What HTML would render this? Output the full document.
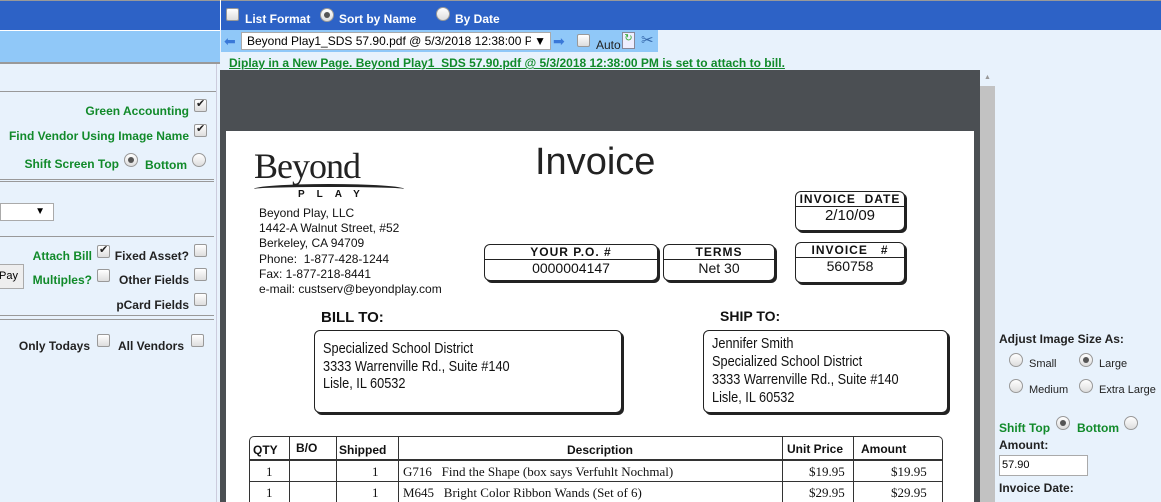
<!DOCTYPE html>
<html><head><meta charset="utf-8"><style>
*{margin:0;padding:0;box-sizing:border-box}
html,body{width:1161px;height:502px;overflow:hidden}
body{background:#e8f2fc;font-family:"Liberation Sans",Arial,sans-serif;position:relative}
.a{position:absolute;white-space:nowrap}
.g{color:#118a2a;font-weight:bold;font-size:12px}
.k{color:#222;font-weight:bold;font-size:12px}
.cb{position:absolute;width:13px;height:13px;border:1px solid #999;border-radius:2px;background:linear-gradient(#fff,#ddd)}
.cb.c::after{content:"✔";position:absolute;left:1px;top:-3px;font-size:11px;color:#222}
.rd{position:absolute;width:14px;height:14px;border:1px solid #999;border-radius:50%;background:linear-gradient(#fff,#ddd)}
.rd.c::after{content:"";position:absolute;left:3px;top:3px;width:6px;height:6px;border-radius:50%;background:#555}
.hl{position:absolute;height:1px;background:#999}
.doc{font-family:"Liberation Sans",Arial,sans-serif;color:#111;overflow:hidden}
.bx{position:absolute;border:1.5px solid #222;border-radius:6px;box-shadow:2px 2px 0 #222;background:#fff}
.ser{font-family:"Liberation Serif",serif}
.nar{display:inline-block;transform:scaleX(.85);transform-origin:0 0}
</style></head><body>
<div class="a" style="left:0;top:0;width:1161px;height:30px;background:#2d62c6;border-top:1px solid #999"></div>
<div class="a" style="left:220px;top:0;width:1px;height:30px;background:#fff"></div>
<div class="a" style="left:0;top:30px;width:220px;height:32px;background:#90c8f8;border-top:1px solid #fff"></div>
<div class="hl" style="left:0;top:62px;width:220px;height:2px;background:#999"></div>
<div class="a" style="left:221px;top:30px;width:437px;height:22px;background:#90c8f8"></div>
<div class="cb" style="left:226px;top:8px"></div>
<div class="a" style="left:245px;top:12px;color:#fff;font-weight:bold;font-size:12px">List Format</div>
<div class="rd c" style="left:320px;top:8px"></div>
<div class="a" style="left:339px;top:12px;color:#fff;font-weight:bold;font-size:12px">Sort by Name</div>
<div class="rd" style="left:436px;top:7px"></div>
<div class="a" style="left:455px;top:12px;color:#fff;font-weight:bold;font-size:12px">By Date</div>
<div class="a" style="left:224px;top:35px;color:#3a78d8;font-size:14px;line-height:12px">⬅</div>
<div class="a" style="left:241px;top:32px;width:310px;height:18px;background:#fff;border:1px solid #aaa;font-size:12px;padding:1px 5px">Beyond Play1_SDS 57.90.pdf @ 5/3/2018 12:38:00 PM<span style="position:absolute;right:4px;top:1px;background:#fff;padding-left:3px">▼</span></div>
<div class="a" style="left:553px;top:35px;color:#3a78d8;font-size:14px;line-height:12px">➡</div>
<div class="cb" style="left:577px;top:34px"></div>
<div class="a" style="left:596px;top:38px;font-size:12px;color:#222">Auto</div>
<div class="a" style="left:622px;top:32px;width:13px;height:17px;background:#eef;border:1px solid #889;color:#3a3;font-size:10px;text-align:center">↻</div>
<div class="a" style="left:641px;top:31px;color:#36a;font-size:15px">✂</div>
<div class="a" style="left:229px;top:56px;color:#118a2a;font-weight:bold;font-size:12px;text-decoration:underline">Diplay in a New Page. Beyond Play1_SDS 57.90.pdf @ 5/3/2018 12:38:00 PM is set to attach to bill.</div>
<!-- left panel -->
<div class="hl" style="left:0;top:91px;width:216px"></div>
<div class="a" style="left:216px;top:64px;width:1px;height:438px;background:#ccd"></div>
<div class="a g" style="right:972px;top:104px">Green Accounting</div><div class="cb c" style="left:194px;top:99px"></div>
<div class="a g" style="right:972px;top:129px">Find Vendor Using Image Name</div><div class="cb c" style="left:194px;top:124px"></div>
<div class="a g" style="right:1042px;top:157px">Shift Screen Top</div><div class="rd c" style="left:124px;top:153px"></div>
<div class="a g" style="right:974px;top:158px">Bottom</div><div class="rd" style="left:192px;top:153px"></div>
<div class="hl" style="left:0;top:179px;width:214px"></div>
<div class="hl" style="left:0;top:181px;width:214px"></div>
<div class="a" style="left:0;top:203px;width:54px;height:18px;background:#fff;border:1px solid #aaa;font-size:10px;text-align:right;padding:2px 8px">▼</div>
<div class="hl" style="left:0;top:236px;width:214px"></div>
<div class="a g" style="right:1069px;top:249px">Attach Bill</div><div class="cb c" style="left:97px;top:245px"></div>
<div class="a k" style="right:972px;top:249px">Fixed Asset?</div><div class="cb" style="left:194px;top:244px"></div>
<div class="a" style="left:-2px;top:264px;width:26px;height:25px;background:#eee;border:1px solid #aaa;font-size:11px;padding:5px 0 0 0">Pay</div>
<div class="a g" style="right:1069px;top:273px">Multiples?</div><div class="cb" style="left:97px;top:269px"></div>
<div class="a k" style="right:972px;top:273px">Other Fields</div><div class="cb" style="left:194px;top:268px"></div>
<div class="a k" style="right:972px;top:298px">pCard Fields</div><div class="cb" style="left:194px;top:293px"></div>
<div class="hl" style="left:0;top:315px;width:214px"></div>
<div class="hl" style="left:0;top:319px;width:214px"></div>
<div class="a k" style="right:1071px;top:339px">Only Todays</div><div class="cb" style="left:97px;top:334px"></div>
<div class="a k" style="right:977px;top:339px">All Vendors</div><div class="cb" style="left:191px;top:334px"></div>
<!-- viewer -->
<div class="a" style="left:220px;top:70px;width:761px;height:432px;background:#4b4f53"></div>
<div class="a" style="left:980px;top:70px;width:15px;height:432px;background:#c2c2c2"></div>
<div class="a" style="left:980px;top:70px;width:15px;height:16px;background:#e8f2fc;font-size:7px;color:#999;text-align:center;line-height:16px">▲</div>
<div class="a doc" style="left:226px;top:131px;width:748px;height:371px;background:#fff">
  <div class="a ser" style="left:28px;top:14px;font-size:36px;letter-spacing:-1px;color:#222">Beyond</div>
  <div class="a" style="left:28px;top:53px;width:150px;height:10px;border-top:3px solid #222;border-radius:50% 50% 0 0"></div>
  <div class="a" style="left:72px;top:58px;font-size:10px;font-weight:bold;letter-spacing:12px">PLAY</div>
  <div class="a" style="left:33px;top:75px;font-size:12px;line-height:15.2px">Beyond Play, LLC<br>1442-A Walnut Street, #52<br>Berkeley, CA 94709<br>Phone:&nbsp; 1-877-428-1244<br>Fax: 1-877-218-8441<br>e-mail: custserv@beyondplay.com</div>
  <div class="a" style="left:309px;top:10px;font-size:38px;color:#222">Invoice</div>
  <div class="bx" style="left:569px;top:60px;width:110px;height:40px"><div style="border-bottom:1.5px solid #222;font-size:12px;font-weight:bold;text-align:center;letter-spacing:1px">INVOICE&nbsp; DATE</div><div style="font-size:15px;text-align:center">2/10/09</div></div>
  <div class="bx" style="left:258px;top:113px;width:174px;height:37px"><div style="border-bottom:1.5px solid #222;font-size:12px;font-weight:bold;text-align:center;letter-spacing:1px">YOUR P.O. #</div><div style="font-size:14px;text-align:center">0000004147</div></div>
  <div class="bx" style="left:437px;top:113px;width:112px;height:37px"><div style="border-bottom:1.5px solid #222;font-size:12px;font-weight:bold;text-align:center;letter-spacing:1px">TERMS</div><div style="font-size:14px;text-align:center">Net 30</div></div>
  <div class="bx" style="left:569px;top:111px;width:110px;height:41px"><div style="border-bottom:1.5px solid #222;font-size:12px;font-weight:bold;text-align:center;letter-spacing:1px">INVOICE&nbsp;&nbsp; #</div><div style="font-size:14px;text-align:center">560758</div></div>
  <div class="a" style="left:95px;top:178px;font-size:15px;font-weight:bold">BILL TO:</div>
  <div class="a" style="left:494px;top:177px;font-size:14px;font-weight:bold">SHIP TO:</div>
  <div class="bx" style="left:88px;top:199px;width:308px;height:83px;font-size:15px;line-height:17.5px;padding:9px 8px"><span class="nar">Specialized School District<br>3333 Warrenville Rd., Suite #140<br>Lisle, IL 60532</span></div>
  <div class="bx" style="left:477px;top:199px;width:245px;height:83px;font-size:15px;line-height:18px;padding:4px 8px"><span class="nar">Jennifer Smith<br>Specialized School District<br>3333 Warrenville Rd., Suite #140<br>Lisle, IL 60532</span></div>
  <div class="a" style="left:23px;top:305px;width:694px;height:80px;border:1px solid #333;border-radius:5px 5px 0 0"></div>
  <div class="a" style="left:23px;top:328px;width:694px;height:2px;background:#333"></div>
  <div class="a" style="left:23px;top:350px;width:694px;height:1px;background:#333"></div>
  <div class="a" style="left:23px;top:371px;width:694px;height:1px;background:#333"></div>
  <div class="a" style="left:63px;top:305px;width:1px;height:70px;background:#333"></div>
  <div class="a" style="left:110px;top:305px;width:1px;height:70px;background:#333"></div>
  <div class="a" style="left:172px;top:305px;width:1px;height:70px;background:#333"></div>
  <div class="a" style="left:556px;top:305px;width:1px;height:70px;background:#333"></div>
  <div class="a" style="left:627px;top:305px;width:1px;height:70px;background:#333"></div>
  <div class="a" style="left:27px;top:312px;font-size:12px;font-weight:bold">QTY</div>
  <div class="a" style="left:70px;top:310px;font-size:12px;font-weight:bold">B/O</div>
  <div class="a" style="left:113px;top:312px;font-size:12px;font-weight:bold">Shipped</div>
  <div class="a" style="left:341px;top:312px;font-size:12px;font-weight:bold">Description</div>
  <div class="a" style="left:561px;top:311px;font-size:12px;font-weight:bold">Unit Price</div>
  <div class="a" style="left:635px;top:311px;font-size:12px;font-weight:bold">Amount</div>
  <div class="a ser" style="left:40px;top:333px;font-size:13px">1</div>
  <div class="a ser" style="left:146px;top:333px;font-size:13px">1</div>
  <div class="a ser" style="left:177px;top:333px;font-size:13px">G716&nbsp;&nbsp; Find the Shape (box says Verfuhlt Nochmal)</div>
  <div class="a ser" style="left:583px;top:333px;font-size:13px">$19.95</div>
  <div class="a ser" style="left:665px;top:333px;font-size:13px">$19.95</div>
  <div class="a ser" style="left:40px;top:354px;font-size:13px">1</div>
  <div class="a ser" style="left:146px;top:354px;font-size:13px">1</div>
  <div class="a ser" style="left:177px;top:354px;font-size:13px">M645&nbsp;&nbsp; Bright Color Ribbon Wands (Set of 6)</div>
  <div class="a ser" style="left:583px;top:354px;font-size:13px">$29.95</div>
  <div class="a ser" style="left:665px;top:354px;font-size:13px">$29.95</div>
</div>
<!-- right panel -->
<div class="a k" style="left:999px;top:332px">Adjust Image Size As:</div>
<div class="rd" style="left:1009px;top:353px"></div><div class="a" style="left:1029px;top:358px;font-size:11px;color:#222">Small</div>
<div class="rd c" style="left:1079px;top:353px"></div><div class="a" style="left:1099px;top:358px;font-size:11px;color:#222">Large</div>
<div class="rd" style="left:1009px;top:379px"></div><div class="a" style="left:1029px;top:384px;font-size:11px;color:#222">Medium</div>
<div class="rd" style="left:1079px;top:379px"></div><div class="a" style="left:1099px;top:384px;font-size:11px;color:#222">Extra Large</div>
<div class="a g" style="left:999px;top:421px">Shift Top</div><div class="rd c" style="left:1056px;top:416px"></div>
<div class="a g" style="left:1077px;top:421px">Bottom</div><div class="rd" style="left:1124px;top:416px"></div>
<div class="a k" style="left:999px;top:438px">Amount:</div>
<div class="a" style="left:999px;top:455px;width:89px;height:21px;background:#fff;border:1px solid #aaa;font-size:11px;padding:3px 2px">57.90</div>
<div class="a k" style="left:999px;top:481px">Invoice Date:</div>
</body></html>
